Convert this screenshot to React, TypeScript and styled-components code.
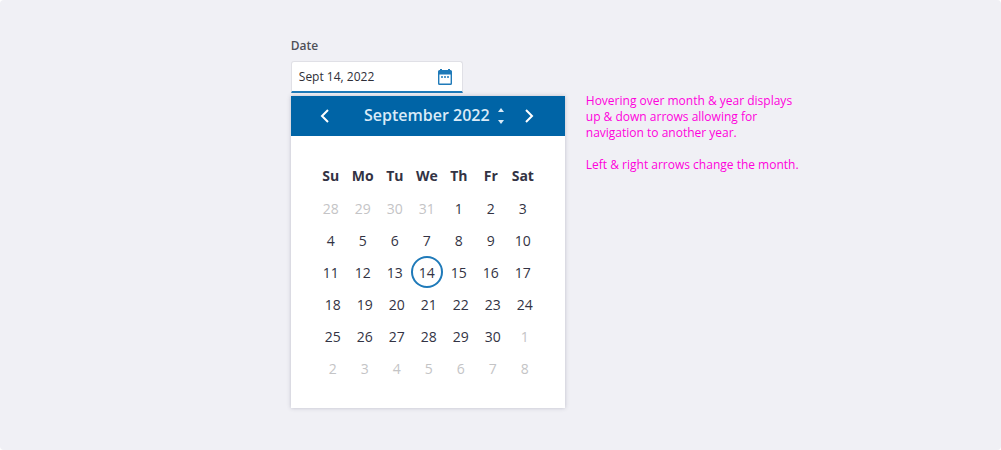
import React, { useState } from "react";
import styled, { createGlobalStyle } from "styled-components";

const GlobalStyle = createGlobalStyle`
  *, *::before, *::after { box-sizing: border-box; }
  body {
    margin: 0;
    background: #fff;
    color: #333344;
    font-family: "Open Sans", "Noto Sans", sans-serif;
  }
  button, input { font: inherit; color: inherit; }
`;

const Page = styled.main`
  display: grid;
  grid-template-columns: 2fr 274px 3fr;
  align-content: start;
  min-height: 100vh;
  padding: 38px 0 42px;
  border-radius: 4px;
  background: #f0f0f5;
`;

const Label = styled.label`
  display: block;
  margin-bottom: 7px;
  color: #4f5058;
  font-size: 12px;
  font-weight: 600;
  line-height: 16px;
`;

const Field = styled.div`
  display: flex;
  align-items: center;
  width: 172px;
  height: 32px;
  padding: 0 9px 0 7px;
  border: 1px solid #e0e0e6;
  border-bottom: 2px solid #1f7ab9;
  border-radius: 3px 3px 0 0;
  background: #fff;
`;

const DateInput = styled.input`
  flex: 1;
  min-width: 0;
  padding: 0;
  border: 0;
  outline: 0;
  background: transparent;
  color: #2f2f38;
  font-size: 12px;
  line-height: 16px;
`;

const PlainButton = styled.button`
  display: flex;
  align-items: center;
  justify-content: center;
  padding: 0;
  border: 0;
  background: none;
  cursor: pointer;
`;

const Calendar = styled.section`
  margin-top: 3px;
  background: #fff;
  box-shadow: 0 0 4px rgba(40, 40, 70, 0.25);
`;

const CalendarHeader = styled.header`
  display: flex;
  align-items: center;
  justify-content: space-between;
  height: 40px;
  padding: 0 28px 0 26px;
  background: #0064a6;
  color: #fff;
`;

const MonthGroup = styled.div`
  display: flex;
  align-items: center;
  gap: 8px;
  margin-left: 14px;
`;

const MonthTitle = styled.h2`
  margin: 0;
  padding-bottom: 2px;
  color: #d9eaf7;
  font-size: 16px;
  font-weight: 600;
  line-height: 24px;
`;

const YearStepper = styled.div`
  display: flex;
  flex-direction: column;
  gap: 8px;
`;

const DayTable = styled.table`
  width: 224px;
  margin: 0 auto;
  border-collapse: collapse;
  table-layout: fixed;
  font-size: 14px;
  line-height: 20px;
`;

const CalendarBody = styled.div`
  padding: 24px 26px 24px 24px;
`;

const Weekday = styled.th`
  height: 32px;
  padding: 0;
  font-weight: 700;
  text-align: center;
`;

const DayCell = styled.td<{ $late: boolean }>`
  height: 32px;
  padding: ${({ $late }) => ($late ? "0 0 0 4px" : "0")};
`;

const DayButton = styled.button<{ $muted: boolean; $selected: boolean }>`
  display: block;
  width: 100%;
  height: 32px;
  padding: 2px 0 0;
  border: 0;
  border-radius: 16px;
  box-shadow: ${({ $selected }) => ($selected ? "inset 0 0 0 2px #1f7ab9" : "none")};
  background: none;
  color: ${({ $muted }) => ($muted ? "#c4c4c6" : "#333344")};
  text-align: center;
  cursor: pointer;
`;

const Notes = styled.aside`
  grid-column: 3;
  padding: 55px 16px 0 21px;
  color: #ff00dc;
  font-size: 12px;
  line-height: 16px;
`;

const Note = styled.p`
  max-width: 216px;
  margin: 0 0 16px;
`;

const Picker = styled.div`
  grid-column: 2;
`;

const weekdays = ["Su", "Mo", "Tu", "We", "Th", "Fr", "Sat"];
const weeks = [0, 1, 2, 3, 4, 5].map((w) =>
  weekdays.map((_, d) => {
    const offset = w * 7 + d - 3;
    if (offset < 1) return { day: offset + 31, muted: true };
    if (offset > 30) return { day: offset - 30, muted: true };
    return { day: offset, muted: false };
  })
);

const CalendarIcon = () => (
  <svg width="16" height="18" viewBox="0 0 16 18" aria-hidden="true">
    <path
      fill="#1f7ab9"
      fillRule="evenodd"
      d="M3 1h2v1h6V1h2v1h.5A1.5 1.5 0 0 1 15 3.5v12a1.5 1.5 0 0 1-1.5 1.500h-11A1.5 1.5 0 0 1 1 15.500v-12A1.5 1.5 0 0 1 2.500 2H3zM2.400 6.400v9.200h11.200V6.400z"
    />
    <path fill="#1f7ab9" fillOpacity="0.75" d="M4 8h2v2H4zM7 8h2v2H7zM10 8h2v2h-2z" />
  </svg>
);

const Chevron = ({ d }: { d: string }) => (
  <svg width="16" height="16" viewBox="0 0 16 16" aria-hidden="true">
    <path d={d} fill="none" stroke="#fff" strokeWidth="2" />
  </svg>
);

const Caret = ({ d }: { d: string }) => (
  <svg width="6" height="4" viewBox="0 0 6 4" aria-hidden="true">
    <path d={d} fill="#d9eaf7" />
  </svg>
);

export default function App() {
  const [value, setValue] = useState("Sept 14, 2022");
  const [selected, setSelected] = useState(14);

  return (
    <>
      <GlobalStyle />
      <Page>
        <Picker>
          <Label htmlFor="date">Date</Label>
          <Field>
            <DateInput id="date" value={value} onChange={(e) => setValue(e.target.value)} />
            <PlainButton type="button" aria-label="Open calendar">
              <CalendarIcon />
            </PlainButton>
          </Field>
          <Calendar aria-label="Choose date">
            <CalendarHeader>
              <PlainButton type="button" aria-label="Previous month">
                <Chevron d="M11 2 5 8l6 6" />
              </PlainButton>
              <MonthGroup>
                <MonthTitle>September 2022</MonthTitle>
                <YearStepper>
                  <PlainButton type="button" aria-label="Next year">
                    <Caret d="M0 4 3 0l3 4z" />
                  </PlainButton>
                  <PlainButton type="button" aria-label="Previous year">
                    <Caret d="M0 0h6L3 4z" />
                  </PlainButton>
                </YearStepper>
              </MonthGroup>
              <PlainButton type="button" aria-label="Next month">
                <Chevron d="m5 2 6 6-6 6" />
              </PlainButton>
            </CalendarHeader>
            <CalendarBody>
              <DayTable>
                <thead>
                  <tr>
                    {weekdays.map((name) => (
                      <Weekday key={name} scope="col">{name}</Weekday>
                    ))}
                  </tr>
                </thead>
                <tbody>
                  {weeks.map((week, w) => (
                    <tr key={w}>
                      {week.map(({ day, muted }) => (
                        <DayCell key={day} $late={w > 2}>
                          <DayButton
                            type="button"
                            $muted={muted}
                            $selected={!muted && day === selected}
                            onClick={() => {
                              if (muted) return;
                              setSelected(day);
                              setValue(`Sept ${day}, 2022`);
                            }}
                          >
                            {day}
                          </DayButton>
                        </DayCell>
                      ))}
                    </tr>
                  ))}
                </tbody>
              </DayTable>
            </CalendarBody>
          </Calendar>
        </Picker>
        <Notes>
          <Note>
            Hovering over month &amp; year displays up &amp; down arrows allowing for navigation to
            another year.
          </Note>
          <Note>Left &amp; right arrows change the month.</Note>
        </Notes>
      </Page>
    </>
  );
}
